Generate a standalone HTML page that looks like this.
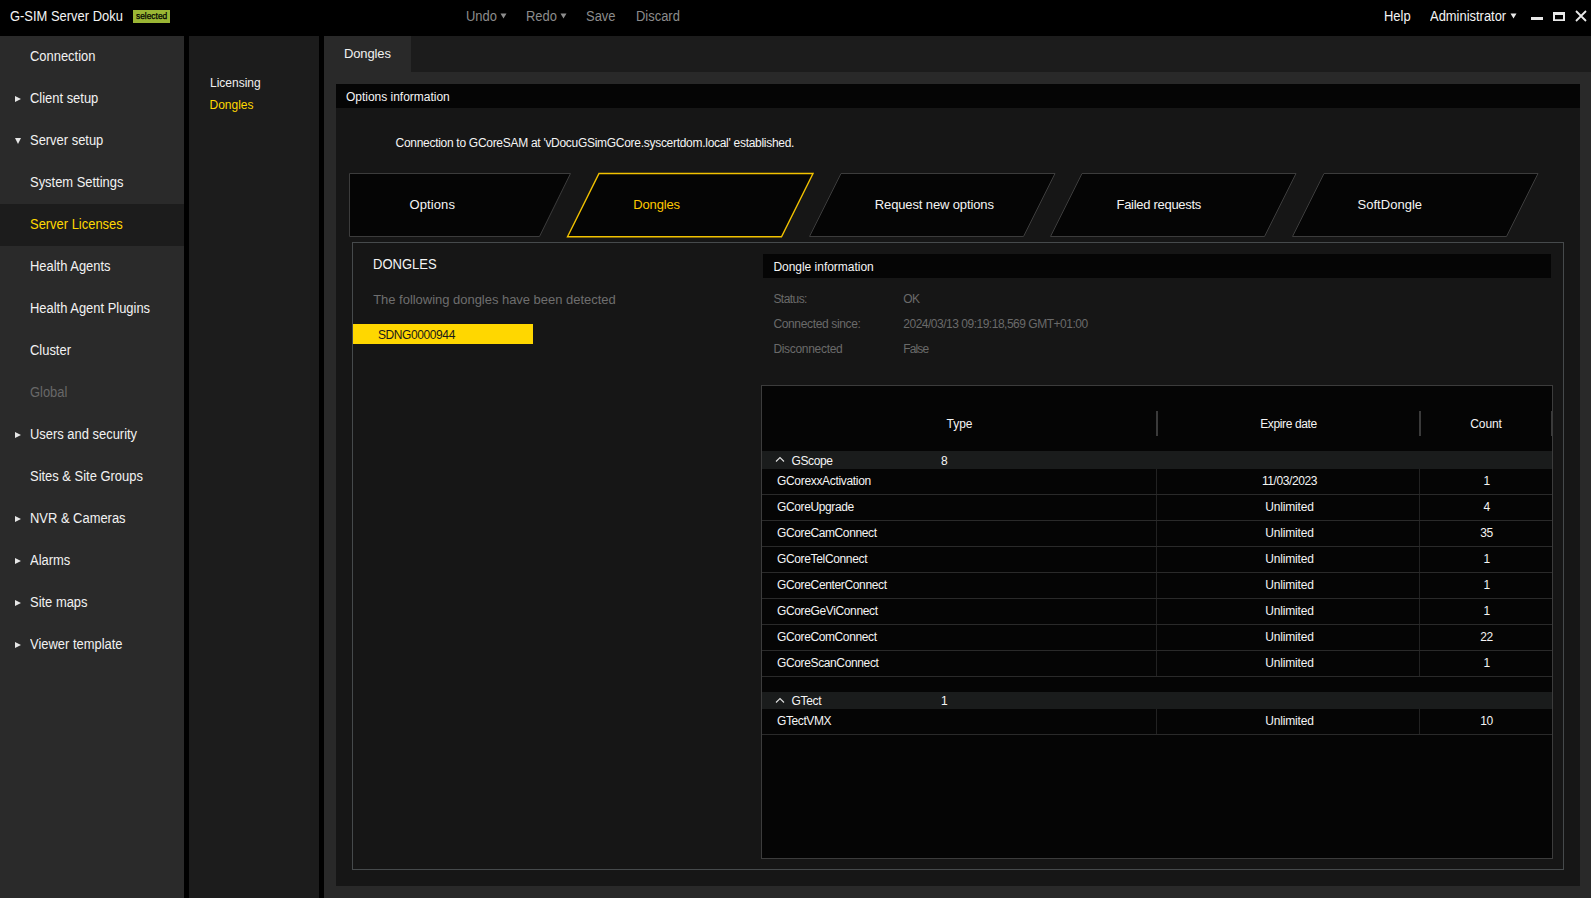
<!DOCTYPE html>
<html><head><meta charset="utf-8">
<style>
*{margin:0;padding:0;box-sizing:border-box}
html,body{width:1591px;height:898px;overflow:hidden;background:#000;font-family:"Liberation Sans",sans-serif;color:#f0f0f0}
.a{position:absolute}
.t{position:absolute;white-space:nowrap;line-height:1}
svg{position:absolute;display:block}
</style></head><body>
<div class="a" style="left:0px;top:0px;width:1591px;height:36px;background:#000;"></div>
<div class="t" style="left:10.00px;top:10.32px;font-size:13.8px;color:#f4f4f4;transform:scaleX(0.9373);transform-origin:0 0;">G-SIM Server Doku</div>
<div class="a" style="left:133px;top:10px;width:37px;height:13px;background:#9ab534;"></div>
<div class="t" style="left:136.00px;top:11.89px;font-size:8.4px;color:#000;-webkit-text-stroke:0.25px #000;">selected</div>
<div class="t" style="left:466.00px;top:10.32px;font-size:13.8px;color:#8c8c8c;transform:scaleX(0.9373);transform-origin:0 0;">Undo</div>
<svg style="left:500px;top:13px" width="7" height="6"><path d="M0.5 0.5H6.5L3.5 5.5Z" fill="#8c8c8c"/></svg>
<div class="t" style="left:526.00px;top:10.32px;font-size:13.8px;color:#8c8c8c;transform:scaleX(0.9373);transform-origin:0 0;">Redo</div>
<svg style="left:560px;top:13px" width="7" height="6"><path d="M0.5 0.5H6.5L3.5 5.5Z" fill="#8c8c8c"/></svg>
<div class="t" style="left:586.00px;top:10.32px;font-size:13.8px;color:#8c8c8c;transform:scaleX(0.9373);transform-origin:0 0;">Save</div>
<div class="t" style="left:636.00px;top:10.32px;font-size:13.8px;color:#8c8c8c;transform:scaleX(0.9373);transform-origin:0 0;">Discard</div>
<div class="t" style="left:1384.00px;top:10.32px;font-size:13.8px;color:#f4f4f4;transform:scaleX(0.9373);transform-origin:0 0;">Help</div>
<div class="t" style="left:1430.00px;top:10.32px;font-size:13.8px;color:#f4f4f4;transform:scaleX(0.9373);transform-origin:0 0;">Administrator</div>
<svg style="left:1510px;top:13px" width="7" height="6"><path d="M0.5 0.5H6.5L3.5 5.5Z" fill="#e8e8e8"/></svg>
<div class="a" style="left:1531px;top:17px;width:12px;height:3px;background:#e8e8e8;"></div>
<svg style="left:1553px;top:12px" width="12" height="9"><path d="M0 0H12V9H0Z M2 3H10V7.3H2Z" fill="#e8e8e8" fill-rule="evenodd"/></svg>
<svg style="left:1575px;top:10px" width="12" height="12"><path d="M1 1L11 11M11 1L1 11" stroke="#e8e8e8" stroke-width="1.8"/></svg>
<div class="a" style="left:0px;top:36px;width:184px;height:862px;background:#2a2a2a;"></div>
<div class="t" style="left:30.00px;top:50.32px;font-size:13.8px;color:#f2f2f2;transform:scaleX(0.9373);transform-origin:0 0;">Connection</div>
<svg style="left:14px;top:95px" width="8" height="8"><path d="M1 1L7 4L1 7Z" fill="#e6e6e6"/></svg>
<div class="t" style="left:30.00px;top:92.32px;font-size:13.8px;color:#f2f2f2;transform:scaleX(0.9373);transform-origin:0 0;">Client setup</div>
<svg style="left:14px;top:137px" width="8" height="8"><path d="M1 1L7 1L4 7Z" fill="#e6e6e6"/></svg>
<div class="t" style="left:30.00px;top:134.32px;font-size:13.8px;color:#f2f2f2;transform:scaleX(0.9373);transform-origin:0 0;">Server setup</div>
<div class="t" style="left:30.00px;top:176.32px;font-size:13.8px;color:#f2f2f2;transform:scaleX(0.9373);transform-origin:0 0;">System Settings</div>
<div class="a" style="left:0px;top:204px;width:184px;height:42px;background:#1c1c1c;"></div>
<div class="t" style="left:30.00px;top:218.32px;font-size:13.8px;color:#ffd800;transform:scaleX(0.9373);transform-origin:0 0;">Server Licenses</div>
<div class="t" style="left:30.00px;top:260.32px;font-size:13.8px;color:#f2f2f2;transform:scaleX(0.9373);transform-origin:0 0;">Health Agents</div>
<div class="t" style="left:30.00px;top:302.32px;font-size:13.8px;color:#f2f2f2;transform:scaleX(0.9373);transform-origin:0 0;">Health Agent Plugins</div>
<div class="t" style="left:30.00px;top:344.32px;font-size:13.8px;color:#f2f2f2;transform:scaleX(0.9373);transform-origin:0 0;">Cluster</div>
<div class="t" style="left:30.00px;top:386.32px;font-size:13.8px;color:#686868;transform:scaleX(0.9373);transform-origin:0 0;">Global</div>
<svg style="left:14px;top:431px" width="8" height="8"><path d="M1 1L7 4L1 7Z" fill="#e6e6e6"/></svg>
<div class="t" style="left:30.00px;top:428.32px;font-size:13.8px;color:#f2f2f2;transform:scaleX(0.9373);transform-origin:0 0;">Users and security</div>
<div class="t" style="left:30.00px;top:470.32px;font-size:13.8px;color:#f2f2f2;transform:scaleX(0.9373);transform-origin:0 0;">Sites &amp; Site Groups</div>
<svg style="left:14px;top:515px" width="8" height="8"><path d="M1 1L7 4L1 7Z" fill="#e6e6e6"/></svg>
<div class="t" style="left:30.00px;top:512.32px;font-size:13.8px;color:#f2f2f2;transform:scaleX(0.9373);transform-origin:0 0;">NVR &amp; Cameras</div>
<svg style="left:14px;top:557px" width="8" height="8"><path d="M1 1L7 4L1 7Z" fill="#e6e6e6"/></svg>
<div class="t" style="left:30.00px;top:554.32px;font-size:13.8px;color:#f2f2f2;transform:scaleX(0.9373);transform-origin:0 0;">Alarms</div>
<svg style="left:14px;top:599px" width="8" height="8"><path d="M1 1L7 4L1 7Z" fill="#e6e6e6"/></svg>
<div class="t" style="left:30.00px;top:596.32px;font-size:13.8px;color:#f2f2f2;transform:scaleX(0.9373);transform-origin:0 0;">Site maps</div>
<svg style="left:14px;top:641px" width="8" height="8"><path d="M1 1L7 4L1 7Z" fill="#e6e6e6"/></svg>
<div class="t" style="left:30.00px;top:638.32px;font-size:13.8px;color:#f2f2f2;transform:scaleX(0.9373);transform-origin:0 0;">Viewer template</div>
<div class="a" style="left:189px;top:36px;width:130px;height:862px;background:#1c1c1c;"></div>
<div class="t" style="left:210.00px;top:76.84px;font-size:12px;color:#f0f0f0;">Licensing</div>
<div class="t" style="left:209.50px;top:98.84px;font-size:12px;color:#ffd800;">Dongles</div>
<div class="a" style="left:324px;top:36px;width:1267px;height:862px;background:#292929;"></div>
<div class="a" style="left:411px;top:36px;width:1180px;height:36px;background:#1c1c1c;"></div>
<div class="t" style="left:344.00px;top:47.00px;font-size:13px;color:#f0f0f0;letter-spacing:-0.128px;">Dongles</div>
<div class="a" style="left:336px;top:84px;width:1244px;height:802px;background:#161616;"></div>
<div class="a" style="left:336px;top:84px;width:1244px;height:24px;background:#050505;"></div>
<div class="t" style="left:346.00px;top:90.84px;font-size:12px;color:#f4f4f4;letter-spacing:-0.018px;">Options information</div>
<div class="t" style="left:395.50px;top:136.84px;font-size:12px;color:#f4f4f4;letter-spacing:-0.289px;">Connection to GCoreSAM at 'vDocuGSimGCore.syscertdom.local' established.</div>
<svg style="left:0;top:0" width="1591" height="898"><polygon points="349.5,173.5 570.5,173.5 539.5,236.5 349.5,236.5" fill="#050505" stroke="#3c3c3c" stroke-width="1"/><polygon points="599.0,173.5 813.0,173.5 781.5,236.8 567.5,236.8" fill="#050505" stroke="#f2c200" stroke-width="1.4"/><polygon points="841.0,173.5 1055.0,173.5 1023.5,236.5 809.5,236.5" fill="#050505" stroke="#3c3c3c" stroke-width="1"/><polygon points="1082.0,173.5 1296.0,173.5 1264.5,236.5 1050.5,236.5" fill="#050505" stroke="#3c3c3c" stroke-width="1"/><polygon points="1324.0,173.5 1538.0,173.5 1506.5,236.5 1292.5,236.5" fill="#050505" stroke="#3c3c3c" stroke-width="1"/></svg>
<div class="t" style="left:409.50px;top:198.00px;font-size:13px;color:#f4f4f4;letter-spacing:0.100px;">Options</div>
<div class="t" style="left:633.30px;top:198.00px;font-size:13px;color:#ffc800;letter-spacing:-0.171px;">Dongles</div>
<div class="t" style="left:874.80px;top:198.00px;font-size:13px;color:#f4f4f4;letter-spacing:-0.127px;">Request new options</div>
<div class="t" style="left:1116.50px;top:198.00px;font-size:13px;color:#f4f4f4;letter-spacing:-0.292px;">Failed requests</div>
<div class="t" style="left:1357.50px;top:198.00px;font-size:13px;color:#f4f4f4;letter-spacing:0.028px;">SoftDongle</div>
<div class="a" style="left:352px;top:242px;width:1212px;height:628px;border:1px solid #464a4c;"></div>
<div class="t" style="left:373.20px;top:256.30px;font-size:15px;color:#f4f4f4;transform:scaleX(0.8670);transform-origin:0 0;">DONGLES</div>
<div class="t" style="left:373.20px;top:293.00px;font-size:13px;color:#6e6e6e;letter-spacing:-0.027px;">The following dongles have been detected</div>
<div class="a" style="left:353px;top:324px;width:180px;height:20px;background:#ffd700;"></div>
<div class="t" style="left:378.00px;top:328.84px;font-size:12px;color:#1a1a1a;letter-spacing:-0.408px;">SDNG0000944</div>
<div class="a" style="left:763px;top:254px;width:788px;height:24px;background:#050505;"></div>
<div class="t" style="left:773.40px;top:260.84px;font-size:12px;color:#f4f4f4;letter-spacing:-0.024px;">Dongle information</div>
<div class="t" style="left:773.40px;top:292.84px;font-size:12px;color:#6a6a6a;letter-spacing:-0.551px;">Status:</div>
<div class="t" style="left:903.30px;top:292.84px;font-size:12px;color:#6a6a6a;letter-spacing:-0.669px;">OK</div>
<div class="t" style="left:773.40px;top:317.84px;font-size:12px;color:#6a6a6a;letter-spacing:-0.345px;">Connected since:</div>
<div class="t" style="left:903.30px;top:317.84px;font-size:12px;color:#6a6a6a;letter-spacing:-0.491px;">2024/03/13 09:19:18,569 GMT+01:00</div>
<div class="t" style="left:773.40px;top:342.84px;font-size:12px;color:#6a6a6a;letter-spacing:-0.309px;">Disconnected</div>
<div class="t" style="left:903.30px;top:342.84px;font-size:12px;color:#6a6a6a;letter-spacing:-0.869px;">False</div>
<div class="a" style="left:761px;top:385px;width:792px;height:474px;background:#050505;border:1px solid #3c3c3c;"></div>
<div class="a" style="left:1156px;top:411px;width:2px;height:25px;background:#3a3a3a;"></div>
<div class="a" style="left:1419px;top:411px;width:2px;height:25px;background:#3a3a3a;"></div>
<div class="a" style="left:1551px;top:411px;width:2px;height:25px;background:#3a3a3a;"></div>
<div class="t" style="left:946.49px;top:418.34px;font-size:12px;color:#f4f4f4;">Type</div>
<div class="t" style="left:1260.15px;top:418.34px;font-size:12px;color:#f4f4f4;letter-spacing:-0.364px;">Expire date</div>
<div class="t" style="left:1470.30px;top:418.34px;font-size:12px;color:#f4f4f4;letter-spacing:-0.124px;">Count</div>
<div class="a" style="left:762px;top:451px;width:790px;height:18px;background:#1a1c1c;"></div>
<svg style="left:775px;top:456px" width="10" height="7"><path d="M1 5.5L5 1.5L9 5.5" fill="none" stroke="#e0e0e0" stroke-width="1.1"/></svg>
<div class="t" style="left:791.50px;top:455.34px;font-size:12px;color:#f4f4f4;letter-spacing:-0.397px;">GScope</div>
<div class="t" style="left:941.00px;top:455.34px;font-size:12px;color:#f4f4f4;">8</div>
<div class="a" style="left:762px;top:494px;width:790px;height:1px;background:#2a2a2a;"></div>
<div class="a" style="left:1156px;top:469px;width:1px;height:25px;background:#222;"></div>
<div class="a" style="left:1419px;top:469px;width:1px;height:25px;background:#222;"></div>
<div class="t" style="left:777.00px;top:474.84px;font-size:12px;color:#f4f4f4;letter-spacing:-0.321px;">GCorexxActivation</div>
<div class="t" style="left:1261.99px;top:474.84px;font-size:12px;color:#f4f4f4;letter-spacing:-0.414px;">11/03/2023</div>
<div class="t" style="left:1483.40px;top:474.84px;font-size:12px;color:#f4f4f4;letter-spacing:-0.467px;">1</div>
<div class="a" style="left:762px;top:520px;width:790px;height:1px;background:#2a2a2a;"></div>
<div class="a" style="left:1156px;top:495px;width:1px;height:25px;background:#222;"></div>
<div class="a" style="left:1419px;top:495px;width:1px;height:25px;background:#222;"></div>
<div class="t" style="left:777.00px;top:500.84px;font-size:12px;color:#f4f4f4;letter-spacing:-0.373px;">GCoreUpgrade</div>
<div class="t" style="left:1265.37px;top:500.84px;font-size:12px;color:#f4f4f4;letter-spacing:-0.195px;">Unlimited</div>
<div class="t" style="left:1483.40px;top:500.84px;font-size:12px;color:#f4f4f4;letter-spacing:-0.467px;">4</div>
<div class="a" style="left:762px;top:546px;width:790px;height:1px;background:#2a2a2a;"></div>
<div class="a" style="left:1156px;top:521px;width:1px;height:25px;background:#222;"></div>
<div class="a" style="left:1419px;top:521px;width:1px;height:25px;background:#222;"></div>
<div class="t" style="left:777.00px;top:526.84px;font-size:12px;color:#f4f4f4;letter-spacing:-0.386px;">GCoreCamConnect</div>
<div class="t" style="left:1265.37px;top:526.84px;font-size:12px;color:#f4f4f4;letter-spacing:-0.195px;">Unlimited</div>
<div class="t" style="left:1480.29px;top:526.84px;font-size:12px;color:#f4f4f4;letter-spacing:-0.467px;">35</div>
<div class="a" style="left:762px;top:572px;width:790px;height:1px;background:#2a2a2a;"></div>
<div class="a" style="left:1156px;top:547px;width:1px;height:25px;background:#222;"></div>
<div class="a" style="left:1419px;top:547px;width:1px;height:25px;background:#222;"></div>
<div class="t" style="left:777.00px;top:552.84px;font-size:12px;color:#f4f4f4;letter-spacing:-0.350px;">GCoreTelConnect</div>
<div class="t" style="left:1265.37px;top:552.84px;font-size:12px;color:#f4f4f4;letter-spacing:-0.195px;">Unlimited</div>
<div class="t" style="left:1483.40px;top:552.84px;font-size:12px;color:#f4f4f4;letter-spacing:-0.467px;">1</div>
<div class="a" style="left:762px;top:598px;width:790px;height:1px;background:#2a2a2a;"></div>
<div class="a" style="left:1156px;top:573px;width:1px;height:25px;background:#222;"></div>
<div class="a" style="left:1419px;top:573px;width:1px;height:25px;background:#222;"></div>
<div class="t" style="left:777.00px;top:578.84px;font-size:12px;color:#f4f4f4;letter-spacing:-0.355px;">GCoreCenterConnect</div>
<div class="t" style="left:1265.37px;top:578.84px;font-size:12px;color:#f4f4f4;letter-spacing:-0.195px;">Unlimited</div>
<div class="t" style="left:1483.40px;top:578.84px;font-size:12px;color:#f4f4f4;letter-spacing:-0.467px;">1</div>
<div class="a" style="left:762px;top:624px;width:790px;height:1px;background:#2a2a2a;"></div>
<div class="a" style="left:1156px;top:599px;width:1px;height:25px;background:#222;"></div>
<div class="a" style="left:1419px;top:599px;width:1px;height:25px;background:#222;"></div>
<div class="t" style="left:777.00px;top:604.84px;font-size:12px;color:#f4f4f4;letter-spacing:-0.366px;">GCoreGeViConnect</div>
<div class="t" style="left:1265.37px;top:604.84px;font-size:12px;color:#f4f4f4;letter-spacing:-0.195px;">Unlimited</div>
<div class="t" style="left:1483.40px;top:604.84px;font-size:12px;color:#f4f4f4;letter-spacing:-0.467px;">1</div>
<div class="a" style="left:762px;top:650px;width:790px;height:1px;background:#2a2a2a;"></div>
<div class="a" style="left:1156px;top:625px;width:1px;height:25px;background:#222;"></div>
<div class="a" style="left:1419px;top:625px;width:1px;height:25px;background:#222;"></div>
<div class="t" style="left:777.00px;top:630.84px;font-size:12px;color:#f4f4f4;letter-spacing:-0.386px;">GCoreComConnect</div>
<div class="t" style="left:1265.37px;top:630.84px;font-size:12px;color:#f4f4f4;letter-spacing:-0.195px;">Unlimited</div>
<div class="t" style="left:1480.29px;top:630.84px;font-size:12px;color:#f4f4f4;letter-spacing:-0.467px;">22</div>
<div class="a" style="left:762px;top:676px;width:790px;height:1px;background:#2a2a2a;"></div>
<div class="a" style="left:1156px;top:651px;width:1px;height:25px;background:#222;"></div>
<div class="a" style="left:1419px;top:651px;width:1px;height:25px;background:#222;"></div>
<div class="t" style="left:777.00px;top:656.84px;font-size:12px;color:#f4f4f4;letter-spacing:-0.369px;">GCoreScanConnect</div>
<div class="t" style="left:1265.37px;top:656.84px;font-size:12px;color:#f4f4f4;letter-spacing:-0.195px;">Unlimited</div>
<div class="t" style="left:1483.40px;top:656.84px;font-size:12px;color:#f4f4f4;letter-spacing:-0.467px;">1</div>
<div class="a" style="left:762px;top:692px;width:790px;height:17px;background:#1a1c1c;"></div>
<svg style="left:775px;top:697px" width="10" height="7"><path d="M1 5.5L5 1.5L9 5.5" fill="none" stroke="#e0e0e0" stroke-width="1.1"/></svg>
<div class="t" style="left:791.50px;top:695.34px;font-size:12px;color:#f4f4f4;letter-spacing:-0.345px;">GTect</div>
<div class="t" style="left:941.00px;top:695.34px;font-size:12px;color:#f4f4f4;">1</div>
<div class="a" style="left:762px;top:734px;width:790px;height:1px;background:#2a2a2a;"></div>
<div class="a" style="left:1156px;top:709px;width:1px;height:25px;background:#222;"></div>
<div class="a" style="left:1419px;top:709px;width:1px;height:25px;background:#222;"></div>
<div class="t" style="left:777.00px;top:714.84px;font-size:12px;color:#f4f4f4;letter-spacing:-0.394px;">GTectVMX</div>
<div class="t" style="left:1265.37px;top:714.84px;font-size:12px;color:#f4f4f4;letter-spacing:-0.195px;">Unlimited</div>
<div class="t" style="left:1480.29px;top:714.84px;font-size:12px;color:#f4f4f4;letter-spacing:-0.467px;">10</div>
</body></html>
